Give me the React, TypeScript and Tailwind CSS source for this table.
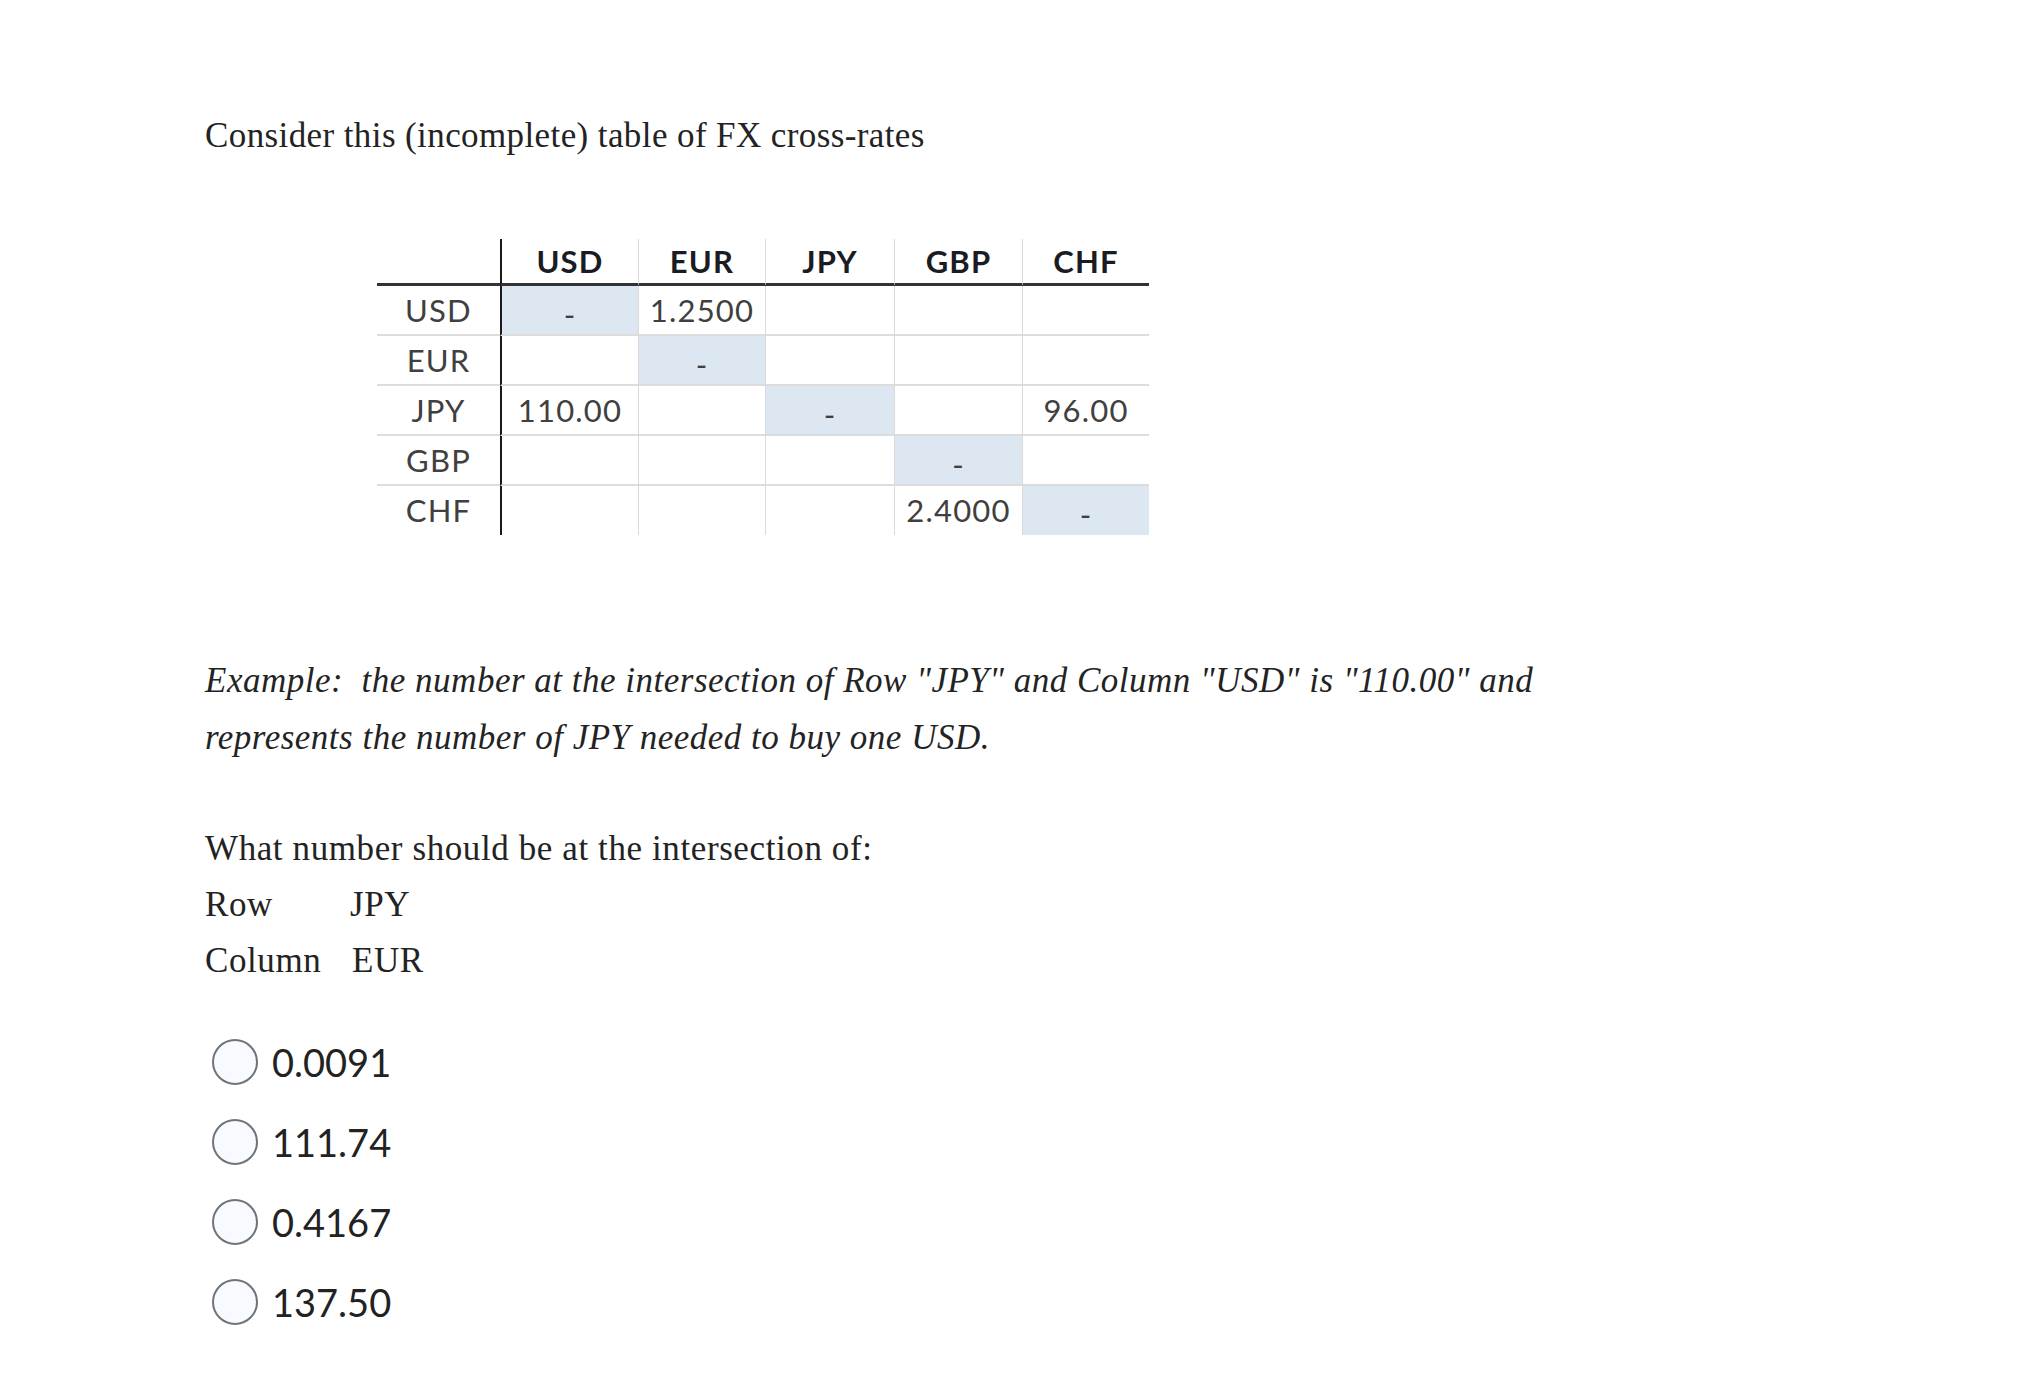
import React from 'react'

const currencies = ['USD', 'EUR', 'JPY', 'GBP', 'CHF']

// known cross-rates, keyed "row-col"
const rates: Record<string, string> = {
  'USD-EUR': '1.2500',
  'JPY-USD': '110.00',
  'JPY-CHF': '96.00',
  'CHF-GBP': '2.4000',
}

const colWidths = ['w-[123px]', 'w-[138px]', 'w-[127px]', 'w-[129px]', 'w-[128px]', 'w-[127px]']

const answers = ['0.0091', '111.74', '0.4167', '137.50']

function RatesTable() {
  return (
    <div className="flex flex-col text-[31px] tracking-[1.2px]" style={{ fontFamily: 'Lato, "Open Sans", sans-serif' }}>
      <div className="flex h-[47px]">
        <div className={`${colWidths[0]} border-b-[3px] border-[#333]`} />
        {currencies.map((c, i) => (
          <div
            key={c}
            className={`${colWidths[i + 1]} flex items-center justify-center border-b-[3px] border-b-[#333] font-bold text-[#1b1b24] ${
              i === 0 ? 'border-l-2 border-l-[#1a1a1a]' : 'border-l border-l-[#dadada]'
            }`}
          >
            {c}
          </div>
        ))}
      </div>
      {currencies.map((row, r) => (
        <div key={row} className={`flex ${r === 4 ? 'h-[49px]' : 'h-[50px]'}`}>
          <div
            className={`${colWidths[0]} flex items-center justify-center text-[#404040] ${
              r < 4 ? 'border-b-2 border-[#dcdcdc]' : ''
            }`}
          >
            {row}
          </div>
          {currencies.map((col, i) => {
            const diag = row === col
            return (
              <div
                key={col}
                className={`${colWidths[i + 1]} flex items-center justify-center text-[#404040] ${
                  i === 0 ? 'border-l-2 border-l-[#1a1a1a]' : 'border-l border-l-[#dadada]'
                } ${r < 4 ? 'border-b-2 border-b-[#dcdcdc]' : ''} ${diag ? 'bg-[#dde7f2] pt-2' : ''}`}
              >
                {diag ? '-' : rates[`${row}-${col}`] ?? ''}
              </div>
            )
          })}
        </div>
      ))}
    </div>
  )
}

export default function App() {
  return (
    <div
      className="min-h-screen bg-white pl-[205px] pt-[108px] pb-20 text-[#232323]"
      style={{ fontFamily: '"Liberation Serif", "Times New Roman", serif' }}
    >
      <p className="text-[35px] leading-[56px] tracking-[0.4px]">Consider this (incomplete) table of FX cross-rates</p>

      <div className="ml-[172px] mt-[75px]">
        <RatesTable />
      </div>

      <p className="mt-[117px] text-[35px] italic leading-[57px] tracking-[0.5px]">
        Example:&nbsp; the number at the intersection of Row "JPY" and Column "USD" is "110.00" and
        <br />
        represents the number of JPY needed to buy one USD.
      </p>

      <div className="mt-[55px] text-[35px] leading-[56px] tracking-[0.6px]">
        <p>What number should be at the intersection of:</p>
        <div className="flex">
          <span className="w-[145px]">Row</span>
          <span>JPY</span>
        </div>
        <div className="flex">
          <span className="w-[147px]">Column</span>
          <span>EUR</span>
        </div>
      </div>

      <div className="mt-[33px] flex flex-col" style={{ fontFamily: 'Lato, "Open Sans", sans-serif' }}>
        {answers.map((a) => (
          <label key={a} className="flex h-[80px] items-center gap-[14px] pl-[7px]">
            <span className="h-[46px] w-[46px] rounded-full border-2 border-[#707478] bg-[#f7faff]" />
            <span className="text-[38px] text-[#222]">{a}</span>
          </label>
        ))}
      </div>
    </div>
  )
}
